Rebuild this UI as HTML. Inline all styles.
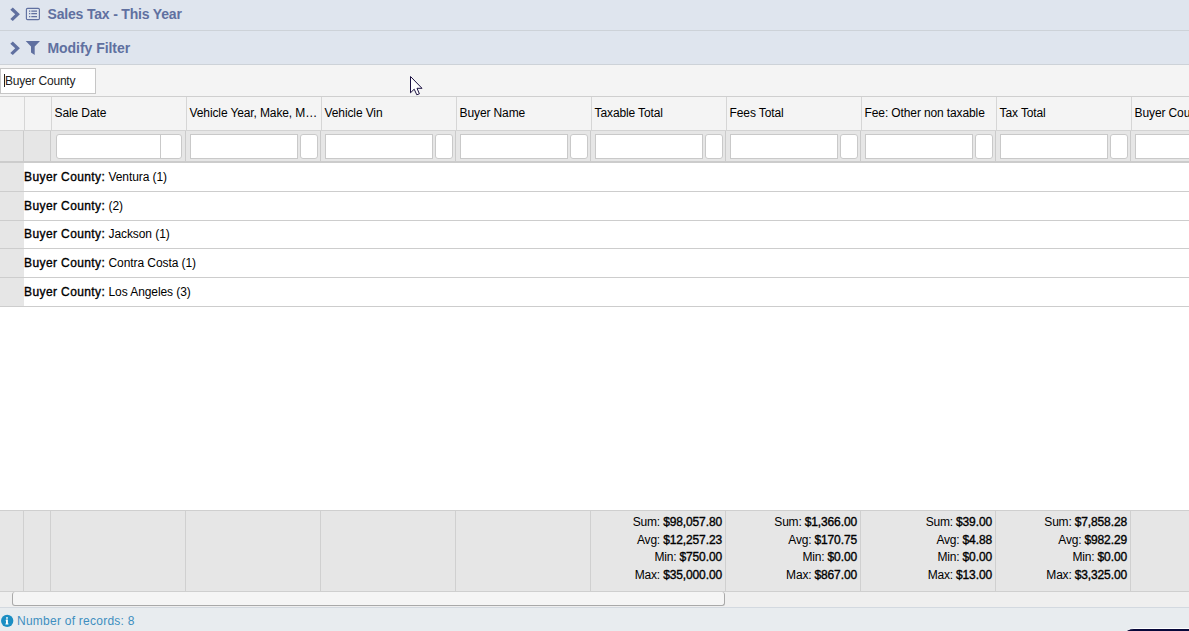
<!DOCTYPE html>
<html><head><meta charset="utf-8">
<style>
*{box-sizing:border-box;margin:0;padding:0}
html,body{width:1189px;height:631px;overflow:hidden;background:#fff;font-family:"Liberation Sans",sans-serif}
.abs{position:absolute}
.panel{position:absolute;left:0;width:1189px;background:#dfe5ee;border-bottom:1px solid #cdd2d8}
.ptitle{position:absolute;left:47.5px;font-size:14px;font-weight:bold;color:#6070a0;letter-spacing:-0.18px}
.toolbar{position:absolute;left:0;top:65px;width:1189px;height:32px;background:#f4f4f4}
.gbox{position:absolute;left:0;top:68px;width:96px;height:26px;background:#fff;border:1px solid #c6c6c6;font-size:12px;color:#333;padding:5px 0 0 4px;line-height:14px;letter-spacing:-0.2px;color:#222}
.caret{position:absolute;left:4px;top:74px;width:1px;height:13px;background:#222}
.hdr{position:absolute;top:96px;height:35px;background:#f4f4f4;border-top:1px solid #cfcfcf;border-bottom:1px solid #d3d3d3;width:1189px;left:0}
.hc{position:absolute;top:0;height:33px;border-left:1px solid #d6d6d6;font-size:12px;color:#000;padding:9px 0 0 2.6px;letter-spacing:-0.12px;white-space:nowrap;overflow:hidden}
.frow{position:absolute;top:131px;left:0;width:1189px;height:32px;background:#e6e6e6;border-bottom:2px solid #cccccc}
.fc{position:absolute;top:0;height:30px;border-left:1px solid #cbcbcb}
.fi{position:absolute;top:3px;height:25px;background:#fff;border:1px solid #c9c9c9}
.fi.r{border-radius:3px}
.sep{position:absolute;left:103px;top:0;width:1px;height:23px;background:#c9c9c9}
.fb{position:absolute;top:3px;height:25px;background:#fff;border:1px solid #c9c9c9;border-radius:3px}
.grp{position:absolute;left:0;width:1189px;height:29px;border-bottom:1px solid #cdcdcd;font-size:12px;color:#111}
.grp .ind{position:absolute;left:0;top:0;width:24px;height:100%;background:#e6e6e6}
.grp b{font-weight:normal;-webkit-text-stroke:0.35px #000;letter-spacing:0.4px}
.grp .t{position:absolute;left:24px;top:7px;white-space:nowrap;color:#000;letter-spacing:-0.08px}
.foot{position:absolute;top:510px;left:0;width:1189px;height:81px;background:#e6e6e6;border-top:1px solid #cfcfcf}
.fcol{position:absolute;top:0;height:81px;border-left:1px solid #d0d0d0;font-size:12px;color:#111;text-align:right;padding:3px 3px 0 0;line-height:17.7px;color:#000;letter-spacing:-0.2px}
.fcol b{font-weight:normal;-webkit-text-stroke:0.35px #000;letter-spacing:-0.12px}
.sb{position:absolute;top:591px;left:0;width:1189px;height:16px;background:#efefef;border-top:1px solid #cfcfcf}
.status{position:absolute;top:607px;left:0;width:1189px;height:24px;background:#e8ecef;border-top:1px solid #d3d9e0}
</style></head><body>
<div class="panel" style="top:0;height:31px">
  <svg class="abs" style="left:0;top:0" width="45" height="30" viewBox="0 0 45 30">
    <path d="M10.3 9.7 L12.8 7.5 L19.9 14.3 L12.8 21.1 L10.3 18.9 L15.2 14.3 Z" fill="#6070a0"/>
    <rect x="26.4" y="8.4" width="13" height="11.2" rx="1.2" fill="none" stroke="#6070a0" stroke-width="1.15"/>
    <path d="M29 11h1.3M29 13.7h1.3M29 16.5h1.3M31.3 11h5.7M31.3 13.7h5.7M31.3 16.5h5.7" stroke="#6070a0" stroke-width="1.25"/>
  </svg>
  <div class="ptitle" style="top:6px">Sales Tax - This Year</div>
</div>
<div class="panel" style="top:31px;height:34px">
  <svg class="abs" style="left:0;top:0" width="45" height="33" viewBox="0 0 45 33">
    <path d="M10.3 12.7 L12.8 10.5 L19.9 17.3 L12.8 24.1 L10.3 21.9 L15.2 17.3 Z" fill="#6070a0"/>
    <path d="M25.7 9.9 H40 L34.7 15.5 V23.9 L31 21.6 V15.5 Z" fill="#6070a0"/>
  </svg>
  <div class="ptitle" style="top:9px;letter-spacing:-0.05px">Modify Filter</div>
</div>
<div class="toolbar"></div>
<div class="gbox">Buyer County</div><div class="caret"></div>
<svg class="abs" style="left:409px;top:75px" width="16" height="22" viewBox="0 0 16 22"><path d="M1.5 1.5 V17.8 L5.2 14.2 L7.8 19.8 L10.4 18.8 L8 13.3 H13 Z" fill="#fff" stroke="#1a1040" stroke-width="1" stroke-linejoin="miter"/></svg>

<div class="hdr">
  <div class="hc" style="left:24px;width:27px"></div>
  <div class="hc" style="left:51px;width:135px">Sale Date</div>
  <div class="hc" style="left:186px;width:135px">Vehicle Year, Make, M&hellip;</div>
  <div class="hc" style="left:321px;width:135px">Vehicle Vin</div>
  <div class="hc" style="left:456px;width:135px">Buyer Name</div>
  <div class="hc" style="left:591px;width:135px">Taxable Total</div>
  <div class="hc" style="left:726px;width:135px">Fees Total</div>
  <div class="hc" style="left:861px;width:135px">Fee: Other non taxable</div>
  <div class="hc" style="left:996px;width:135px">Tax Total</div>
  <div class="hc" style="left:1131px;width:60px">Buyer County</div>
</div>
<div class="frow">
  <div class="fc" style="left:23px;width:27px"></div>
  <div class="fc" style="left:50px;width:135px"></div>
  <div class="fi r" style="left:56px;width:126px"><div class="sep"></div></div>
  <div class="fc" style="left:185px;width:135px"></div>
  <div class="fi" style="left:190px;width:108px"></div>
  <div class="fb" style="left:300px;width:18px"></div>
  <div class="fc" style="left:320px;width:135px"></div>
  <div class="fi" style="left:325px;width:108px"></div>
  <div class="fb" style="left:435px;width:18px"></div>
  <div class="fc" style="left:455px;width:135px"></div>
  <div class="fi" style="left:460px;width:108px"></div>
  <div class="fb" style="left:570px;width:18px"></div>
  <div class="fc" style="left:590px;width:135px"></div>
  <div class="fi" style="left:595px;width:108px"></div>
  <div class="fb" style="left:705px;width:18px"></div>
  <div class="fc" style="left:725px;width:135px"></div>
  <div class="fi" style="left:730px;width:108px"></div>
  <div class="fb" style="left:840px;width:18px"></div>
  <div class="fc" style="left:860px;width:135px"></div>
  <div class="fi" style="left:865px;width:108px"></div>
  <div class="fb" style="left:975px;width:18px"></div>
  <div class="fc" style="left:995px;width:135px"></div>
  <div class="fi" style="left:1000px;width:108px"></div>
  <div class="fb" style="left:1110px;width:18px"></div>
  <div class="fc" style="left:1130px;width:60px"></div>
  <div class="fi" style="left:1135px;width:60px"></div>
</div>

<div class="grp" style="top:163px"><div class="ind"></div><div class="t"><b>Buyer County:</b> Ventura (1)</div></div>
<div class="grp" style="top:192px"><div class="ind"></div><div class="t"><b>Buyer County:</b> (2)</div></div>
<div class="grp" style="top:221px;height:28px"><div class="ind"></div><div class="t" style="top:6px"><b>Buyer County:</b> Jackson (1)</div></div>
<div class="grp" style="top:249px"><div class="ind"></div><div class="t"><b>Buyer County:</b> Contra Costa (1)</div></div>
<div class="grp" style="top:278px"><div class="ind"></div><div class="t"><b>Buyer County:</b> Los Angeles (3)</div></div>

<div class="foot">
  <div class="fcol" style="left:23px;width:27px"></div>
  <div class="fcol" style="left:50px;width:135px"></div>
  <div class="fcol" style="left:185px;width:135px"></div>
  <div class="fcol" style="left:320px;width:135px"></div>
  <div class="fcol" style="left:455px;width:135px"></div>
  <div class="fcol" style="left:590px;width:135px">Sum: <b>$98,057.80</b><br>Avg: <b>$12,257.23</b><br>Min: <b>$750.00</b><br>Max: <b>$35,000.00</b></div>
  <div class="fcol" style="left:725px;width:135px">Sum: <b>$1,366.00</b><br>Avg: <b>$170.75</b><br>Min: <b>$0.00</b><br>Max: <b>$867.00</b></div>
  <div class="fcol" style="left:860px;width:135px">Sum: <b>$39.00</b><br>Avg: <b>$4.88</b><br>Min: <b>$0.00</b><br>Max: <b>$13.00</b></div>
  <div class="fcol" style="left:995px;width:135px">Sum: <b>$7,858.28</b><br>Avg: <b>$982.29</b><br>Min: <b>$0.00</b><br>Max: <b>$3,325.00</b></div>
  <div class="fcol" style="left:1130px;width:60px"></div>
</div>
<div class="sb"><div class="abs" style="left:12px;top:0;width:713px;height:14px;background:#f5f5f5;border:1px solid #a9a9a9;border-top:none;border-radius:3px"></div><div class="abs" style="left:16px;top:0;width:705px;height:1px;background:#f5f5f5"></div></div>
<div class="status">
  <svg class="abs" style="left:0;top:6px" width="15" height="15" viewBox="0 0 15 15"><circle cx="7.2" cy="6.8" r="6.15" fill="#1b8ec3"/><path d="M6 5.4h1.9v4.1h0.6v1.1h-3.1v-1.1h0.6v-3h-0.6z" fill="#fff"/><circle cx="7" cy="3.9" r="0.95" fill="#fff"/></svg>
  <div class="abs" style="left:17px;top:6px;font-size:12px;color:#3e8fc0;letter-spacing:0.25px">Number of records: 8</div>
</div>
<div class="abs" style="left:1124px;top:628px;width:90px;height:30px;background:#08083a;border:1px solid #fff;border-radius:10px/6px"></div>
</body></html>
